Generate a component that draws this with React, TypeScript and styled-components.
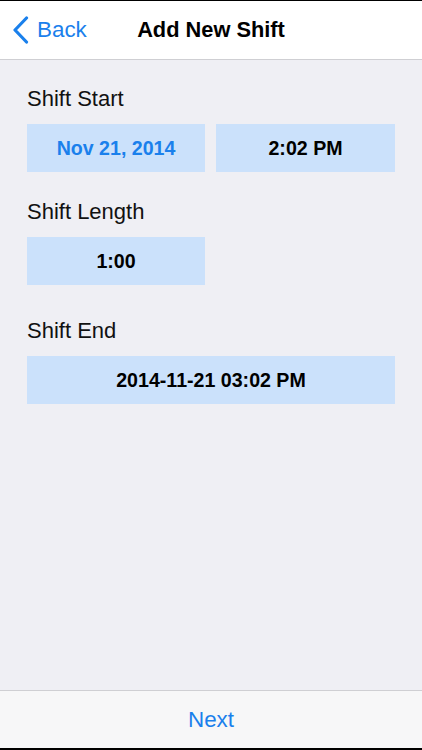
import React from 'react'
import styled, { createGlobalStyle } from 'styled-components'

const GlobalStyle = createGlobalStyle`
  html, body {
    margin: 0;
    padding: 0;
    background: #000;
  }
  body {
    font-family: 'Liberation Sans', Arial, sans-serif;
  }
`

const Screen = styled.div`
  display: flex;
  flex-direction: column;
  width: 422px;
  height: 750px;
  box-sizing: border-box;
  border-top: 1px solid #000;
  border-bottom: 2px solid #000;
  background: #efeff4;
`

const NavBar = styled.header`
  position: relative;
  display: flex;
  align-items: center;
  justify-content: center;
  height: 58px;
  flex-shrink: 0;
  background: #fff;
  border-bottom: 1px solid #cfcfd3;
`

const BackButton = styled.button`
  position: absolute;
  left: 12px;
  top: 15px;
  display: flex;
  align-items: center;
  gap: 8px;
  padding: 0;
  border: 0;
  background: none;
  color: #1a80ec;
  font-family: inherit;
  font-size: 22.4px;
  line-height: 28px;
  cursor: pointer;
`

const Title = styled.h1`
  margin: 0;
  font-size: 21.8px;
  font-weight: bold;
  color: #000;
  line-height: 28px;
`

const Content = styled.main`
  flex: 1;
  display: flex;
  flex-direction: column;
  padding: 26px 27px 0;
`

const Section = styled.section<{ $gap: number }>`
  display: flex;
  flex-direction: column;
  gap: 12px;
  margin-bottom: ${({ $gap }) => $gap}px;
`

const Label = styled.div`
  font-size: 22px;
  line-height: 26px;
  color: #111;
`

const FieldRow = styled.div`
  display: grid;
  grid-template-columns: 178px 179px;
  gap: 11px;
`

const Field = styled.div<{ $accent?: boolean; $wide?: boolean }>`
  grid-column: ${({ $wide }) => ($wide ? '1 / -1' : 'auto')};
  display: flex;
  align-items: center;
  justify-content: center;
  height: 48px;
  background: #cbe1fb;
  color: ${({ $accent }) => ($accent ? '#1a80ec' : '#000')};
  font-size: 19.6px;
  font-weight: bold;
`

const Footer = styled.footer`
  display: flex;
  align-items: center;
  justify-content: center;
  height: 57px;
  flex-shrink: 0;
  background: #f7f7f8;
  border-top: 1px solid #cfcfd3;
`

const NextButton = styled.button`
  padding: 0;
  border: 0;
  background: none;
  color: #1a80ec;
  font-family: inherit;
  font-size: 22.4px;
  line-height: 28px;
  cursor: pointer;
`

const Chevron = () => (
  <svg width="17" height="28" viewBox="0 0 17 28" fill="none">
    <path
      d="M14.5 2 L3 14 L14.5 26"
      stroke="#1a80ec"
      strokeWidth="3.2"
      strokeLinecap="round"
      strokeLinejoin="round"
    />
  </svg>
)

export default function App() {
  return (
    <>
      <GlobalStyle />
      <Screen>
        <NavBar>
          <BackButton>
            <Chevron />
            Back
          </BackButton>
          <Title>Add New Shift</Title>
        </NavBar>
        <Content>
          <Section $gap={27}>
            <Label>Shift Start</Label>
            <FieldRow>
              <Field $accent>Nov 21, 2014</Field>
              <Field>2:02 PM</Field>
            </FieldRow>
          </Section>
          <Section $gap={33}>
            <Label>Shift Length</Label>
            <FieldRow>
              <Field>1:00</Field>
            </FieldRow>
          </Section>
          <Section $gap={0}>
            <Label>Shift End</Label>
            <FieldRow>
              <Field $wide>2014-11-21 03:02 PM</Field>
            </FieldRow>
          </Section>
        </Content>
        <Footer>
          <NextButton>Next</NextButton>
        </Footer>
      </Screen>
    </>
  )
}
